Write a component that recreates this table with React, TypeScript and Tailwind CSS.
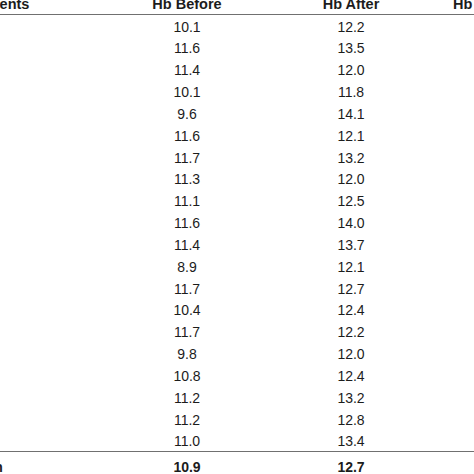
const before = ['10.1', '11.6', '11.4', '10.1', '9.6', '11.6', '11.7', '11.3', '11.1', '11.6', '11.4', '8.9', '11.7', '10.4', '11.7', '9.8', '10.8', '11.2', '11.2', '11.0'];
const after = ['12.2', '13.5', '12.0', '11.8', '14.1', '12.1', '13.2', '12.0', '12.5', '14.0', '13.7', '12.1', '12.7', '12.4', '12.2', '12.0', '12.4', '13.2', '12.8', '13.4'];

const cols = 'grid grid-cols-[129px_164px_164px_164px]';

export default function App() {
  return (
    <div className="w-[474px] h-[474px] overflow-hidden bg-white text-[#1c1c1c] font-['Liberation_Sans',Arial,sans-serif]">
      <div className="-ml-[24px] w-[621px]">
        {/* header */}
        <div className={`${cols} h-[14.5px] border-b-[1.5px] border-[#707070] text-[14.5px] font-bold leading-[9px]`}>
          <div className="-ml-[3px]">Patients</div>
          <div className="text-center">Hb Before</div>
          <div className="text-center">Hb After</div>
          <div className="pl-[20px]">Hb Difference</div>
        </div>

        {before.map((b, i) => (
          <div key={i} className={`${cols} h-[21.83px] pt-[2.1px] text-[14px] leading-[21.83px]`}>
            <div>{i + 1}</div>
            <div className="text-center">{b}</div>
            <div className="text-center">{after[i]}</div>
            <div className="text-center">{(parseFloat(after[i]) - parseFloat(b)).toFixed(1)}</div>
          </div>
        ))}

        <div className={`${cols} border-t-[1.4px] border-[#707070] pt-[4px] text-[14px] font-bold leading-[22px]`}>
          <div className="-ml-[9px]">Mean</div>
          <div className="text-center">10.9</div>
          <div className="text-center">12.7</div>
          <div className="text-center">1.8</div>
        </div>
      </div>
    </div>
  );
}
